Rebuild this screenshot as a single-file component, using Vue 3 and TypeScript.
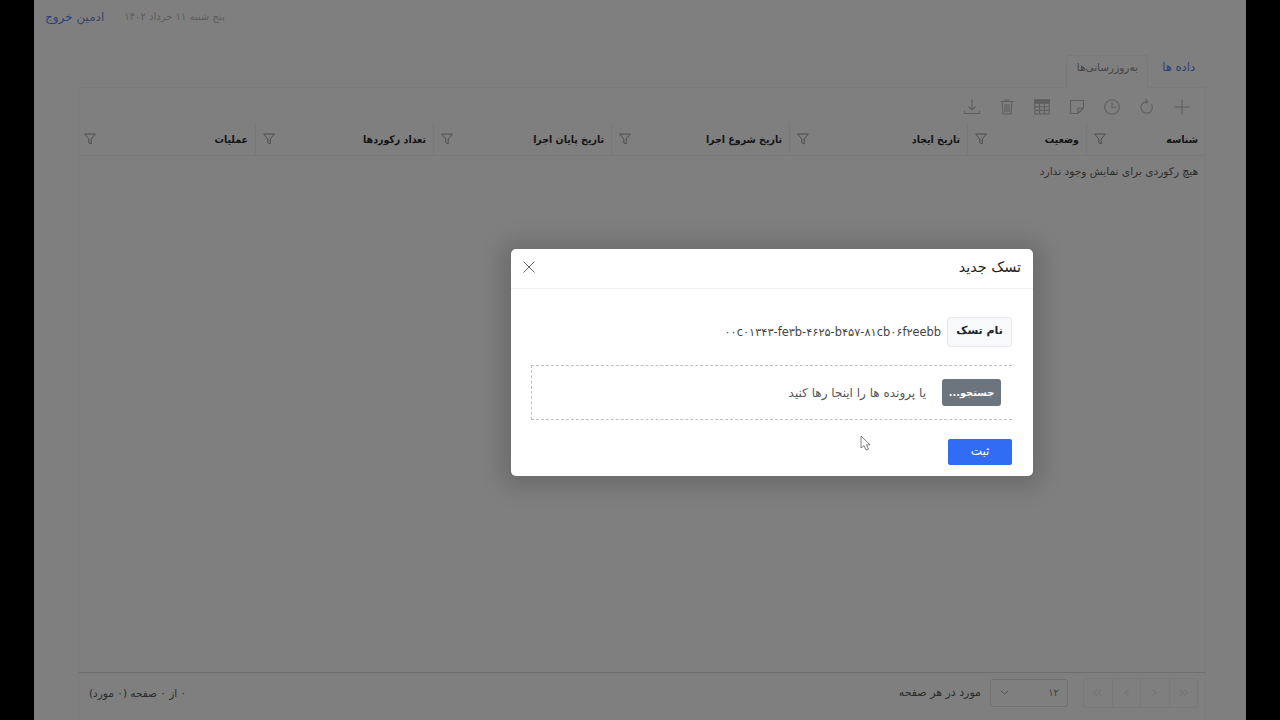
<script setup lang="ts">
const columns: { title: string; wide: boolean }[] = [
  { title: 'شناسه', wide: false },
  { title: 'وضعیت', wide: false },
  { title: 'تاریخ ایجاد', wide: true },
  { title: 'تاریخ شروع اجرا', wide: true },
  { title: 'تاریخ پایان اجرا', wide: true },
  { title: 'تعداد رکوردها', wide: true },
  { title: 'عملیات', wide: true },
]
</script>

<template>
  <div class="screen" dir="rtl">
    <div class="page">
      <header class="top">
        <span class="date">پنج شنبه ۱۱ خرداد ۱۴۰۲</span>
        <span class="user"><span class="name">ادمین</span> <a class="link">خروج</a></span>
      </header>

      <main class="panel">
        <nav class="tabs">
          <a class="tab link">داده ها</a>
          <span class="tab active">به‌روزرسانی‌ها</span>
        </nav>

        <section class="grid">
          <div class="toolbar">
            <svg viewBox="0 0 18 18" class="tool"><path d="M9 1.500v15M1.500 9h15" /></svg>
            <svg viewBox="0 0 18 18" class="tool"><path d="M13.400 6A5.800 5.800 0 1 1 9 3.600M7.500 1.400 9.800 3.500 7.700 5.800" /></svg>
            <svg viewBox="0 0 18 18" class="tool"><circle cx="9" cy="9" r="7.300" /><path d="M9 3.800v5.400h4.200" /></svg>
            <svg viewBox="0 0 18 18" class="tool"><path d="M2.500 2.500h13v7.500l-5.500 5.500H2.500zM15.500 10H11a1 1 0 0 0-1 1v4.500" /></svg>
            <svg viewBox="0 0 18 18" class="tool"><rect x="1.800" y="2" width="14.400" height="14" /><rect x="1.800" y="2" width="14.400" height="3.200" class="solid" /><path d="M1.800 8.800h14.400M1.800 12.400h14.400M6.600 5v11M11.400 5v11" /></svg>
            <svg viewBox="0 0 18 18" class="tool"><path d="M2.500 3.500h13M4 3.500 5 16h8l1-12.500M6 2h6M7 6v8M9 6v8M11 6v8" /></svg>
            <svg viewBox="0 0 18 18" class="tool"><path d="M9 1.500V12M5.500 8.500 9 12l3.500-3.500M1.500 12.500V15.500h15v-3" /></svg>
          </div>

          <div class="thead">
            <div v-for="col in columns" :key="col.title" class="th" :class="{ wide: col.wide }">
              <span class="th-title">{{ col.title }}</span>
              <svg viewBox="0 0 12 12" class="filter"><path d="M.6 1h10.800L7.200 6v5L4.800 9.800V6z" /></svg>
            </div>
          </div>

          <div class="empty">هیچ رکوردی برای نمایش وجود ندارد</div>

          <footer class="foot">
            <div class="pager">
              <button class="pg">
                <svg viewBox="0 0 12 12"><path d="M2 2.500 5.500 6 2 9.500M6.500 2.500 10 6 6.500 9.500" /></svg>
              </button>
              <button class="pg">
                <svg viewBox="0 0 12 12"><path d="M4 2.500 7.500 6 4 9.500" /></svg>
              </button>
              <button class="pg">
                <svg viewBox="0 0 12 12"><path d="M8 2.500 4.500 6 8 9.500" /></svg>
              </button>
              <button class="pg">
                <svg viewBox="0 0 12 12"><path d="M5.500 2.500 2 6l3.500 3.500M10 2.500 6.500 6l3.500 3.500" /></svg>
              </button>
            </div>
            <div class="select">
              <span>۱۲</span>
              <svg viewBox="0 0 12 12"><path d="M2 4.200 6 7.800l4-3.600" /></svg>
            </div>
            <span class="per">مورد در هر صفحه</span>
            <span class="count">۰ از ۰ صفحه (۰ مورد)</span>
          </footer>
        </section>
      </main>

      <div class="modal">
        <div class="m-head">
          <h2>تسک جدید</h2>
          <svg viewBox="0 0 12 12" class="close"><path d="M.5.500l11 11M11.500.500l-11 11" /></svg>
        </div>
        <div class="m-body">
          <div class="name-row">
            <span class="label">نام تسک</span>
            <span class="task">۰۰c۰۱۳۴۳-fe۳b-۴۶۲۵-b۴۵۷-۸۱cb۰۶f۲eebb</span>
          </div>
          <div class="drop">
            <span class="browse">جستجو...</span>
            <span class="hint">یا پرونده ها را اینجا رها کنید</span>
          </div>
          <button class="submit">ثبت</button>
        </div>
      </div>

      <svg viewBox="0 0 11 17" class="cursor"><path d="M1 1v12l3-2.500L6 15l2.500-1-2-4.200H10z" /></svg>
    </div>
  </div>
</template>

<style scoped>
.screen {
  width: 1280px;
  height: 720px;
  background: #000;
  display: flex;
  justify-content: center;
  overflow: hidden;
  font-family: "DejaVu Sans", "Noto Sans", sans-serif;
}
.page {
  position: relative;
  width: 1212px;
  height: 720px;
  background: #7f7f7f;
  display: flex;
  flex-direction: column;
  color: #1c1c1c;
}
.top {
  flex: none;
  height: 35px;
  display: flex;
  justify-content: flex-end;
  align-items: center;
  gap: 20px;
  padding-left: 11px;
  padding-bottom: 2px;
  box-sizing: border-box;
  font-size: 10px;
}
.date { color: #5c5c5c; }
.user { font-size: 12px; }
.name { color: #3d4560; }
.link { color: #2b3f7a; }
.panel {
  flex: 1;
  display: flex;
  flex-direction: column;
  padding: 20px 40px 0 40px;
  min-height: 0;
}
.tabs {
  flex: none;
  height: 33px;
  display: flex;
  align-items: stretch;
  margin-bottom: -1px;
  position: relative;
  font-size: 10.500px;
}
.tab {
  display: flex;
  align-items: center;
  padding: 0 0 9px;
}
.tabs .link {
  font-size: 11.500px;
  padding: 0 11px 9px 12px;
  margin-left: 2px;
}
.active {
  width: 82px;
  box-sizing: border-box;
  justify-content: center;
  color: #444;
  border: 1px solid #797979;
  border-bottom-color: #7f7f7f;
  border-radius: 3px 3px 0 0;
}
.grid {
  flex: 1;
  min-height: 0;
  display: flex;
  flex-direction: column;
  border: 1px solid #7a7a7a;
  border-bottom: 0;
  width: 1128px;
  box-sizing: border-box;
}
.toolbar {
  flex: none;
  height: 35px;
  display: flex;
  align-items: center;
  gap: 17px;
  padding: 2px 14.500px 0 0;
  box-sizing: border-box;
}
.tool {
  width: 18px;
  height: 18px;
  flex: none;
  fill: none;
  stroke: #5e5e5e;
  stroke-width: 1.100;
}
.solid { fill: #5e5e5e; }
.thead {
  flex: none;
  height: 32px;
  display: flex;
  border-bottom: 1px solid #797979;
  margin-left: -1px;
}
.th {
  width: 119px;
  flex: none;
  box-sizing: border-box;
  border-left: 1px solid #797979;
  display: flex;
  align-items: center;
  justify-content: space-between;
  padding: 0 7px 0 7px;
  font-size: 10.500px;
  font-weight: 700;
  color: #151515;
}
.th-title {
  font-family: "DejaVu Sans Condensed", "DejaVu Sans", sans-serif;
  font-size: 10.500px;
}
.th.wide { width: 178px; }
.th:last-child { border-left: 0; }
.filter {
  width: 12px;
  height: 12px;
  flex: none;
  fill: none;
  stroke: #4a4a4a;
  stroke-width: 0.900;
}
.empty {
  flex: 1;
  padding: 9px 7px 0 0;
  font-size: 10.600px;
  color: #2e2e2e;
}
.foot {
  flex: none;
  height: 48px;
  border-top: 1px solid #6e6e6e;
  display: flex;
  align-items: center;
  padding: 0 7px 8px 10px;
  box-sizing: border-box;
  font-size: 11px;
  color: #2c2c2c;
}
.pager {
  display: flex;
  width: 115px;
  height: 30px;
  flex: none;
  margin-left: 15px;
  border: 1px solid #797979;
  border-radius: 3px;
  box-sizing: border-box;
}
.pg {
  flex: 1;
  padding: 0;
  background: none;
  border: 0;
  border-left: 1px solid #797979;
  display: flex;
  align-items: center;
  justify-content: center;
}
.pg:last-child { border-left: 0; }
.pg svg {
  width: 11px;
  height: 11px;
  fill: none;
  stroke: #6a6a6a;
}
.select {
  width: 78px;
  height: 28px;
  flex: none;
  box-sizing: border-box;
  border: 1px solid #707070;
  border-radius: 3px;
  display: flex;
  align-items: center;
  justify-content: space-between;
  padding: 0 8px 0 8px;
  margin-left: 9px;
  font-size: 10px;
  color: #4a4040;
}
.select svg {
  width: 11px;
  height: 11px;
  fill: none;
  stroke: #4e4e4e;
}
.per { flex: 1; }
.count { font-size: 10.500px; }
.modal {
  position: absolute;
  left: 477px;
  top: 249px;
  width: 522px;
  height: 227px;
  background: #fff;
  border-radius: 5px;
  box-shadow: 0 2px 22px 10px rgba(0, 0, 0, 0.15);
  display: flex;
  flex-direction: column;
}
.m-head {
  flex: none;
  height: 40px;
  display: flex;
  align-items: center;
  justify-content: space-between;
  padding: 0 12px 3px 12px;
  box-sizing: border-box;
  border-bottom: 1px solid #eef0f3;
}
.m-head h2 {
  margin: 0;
  font-size: 14.400px;
  font-weight: 400;
  color: #222;
}
.close {
  width: 12px;
  height: 12px;
  fill: none;
  stroke: #555;
  stroke-width: 0.900;
}
.m-body {
  flex: 1;
  display: flex;
  flex-direction: column;
  padding: 28px 21px 0 21px;
}
.name-row {
  display: flex;
  align-items: center;
  gap: 6px;
}
.label {
  width: 65px;
  height: 30px;
  box-sizing: border-box;
  display: flex;
  align-items: center;
  justify-content: center;
  padding-bottom: 3px;
  background: #f8f9fa;
  border: 1px solid #e6e8ec;
  border-radius: 4px;
  font-size: 11px;
  font-weight: 700;
  color: #212529;
}
.task {
  font-size: 11.400px;
  color: #444;
}
.drop {
  margin: 18px 0 0 -1px;
  height: 55px;
  box-sizing: border-box;
  border: 1px dashed #c0c0c0;
  border-right: 0;
  display: flex;
  align-items: center;
  gap: 16px;
  padding-right: 11px;
}
.browse {
  width: 59px;
  height: 27px;
  display: flex;
  align-items: center;
  justify-content: center;
  background: #6c757d;
  border-radius: 3px;
  color: #fff;
  font-size: 9.800px;
  font-weight: 700;
}
.hint {
  font-size: 12px;
  color: #555;
}
.submit {
  align-self: flex-start;
  margin-top: 19px;
  width: 64px;
  height: 26px;
  border: 0;
  border-radius: 2px;
  background: #316cf4;
  color: #fff;
  font-family: inherit;
  font-size: 12px;
  padding: 0 0 2px;
}
.cursor {
  position: absolute;
  left: 826px;
  top: 435px;
  width: 11px;
  height: 17px;
  fill: #fff;
  stroke: #333;
  stroke-width: 0.600;
}
</style>
